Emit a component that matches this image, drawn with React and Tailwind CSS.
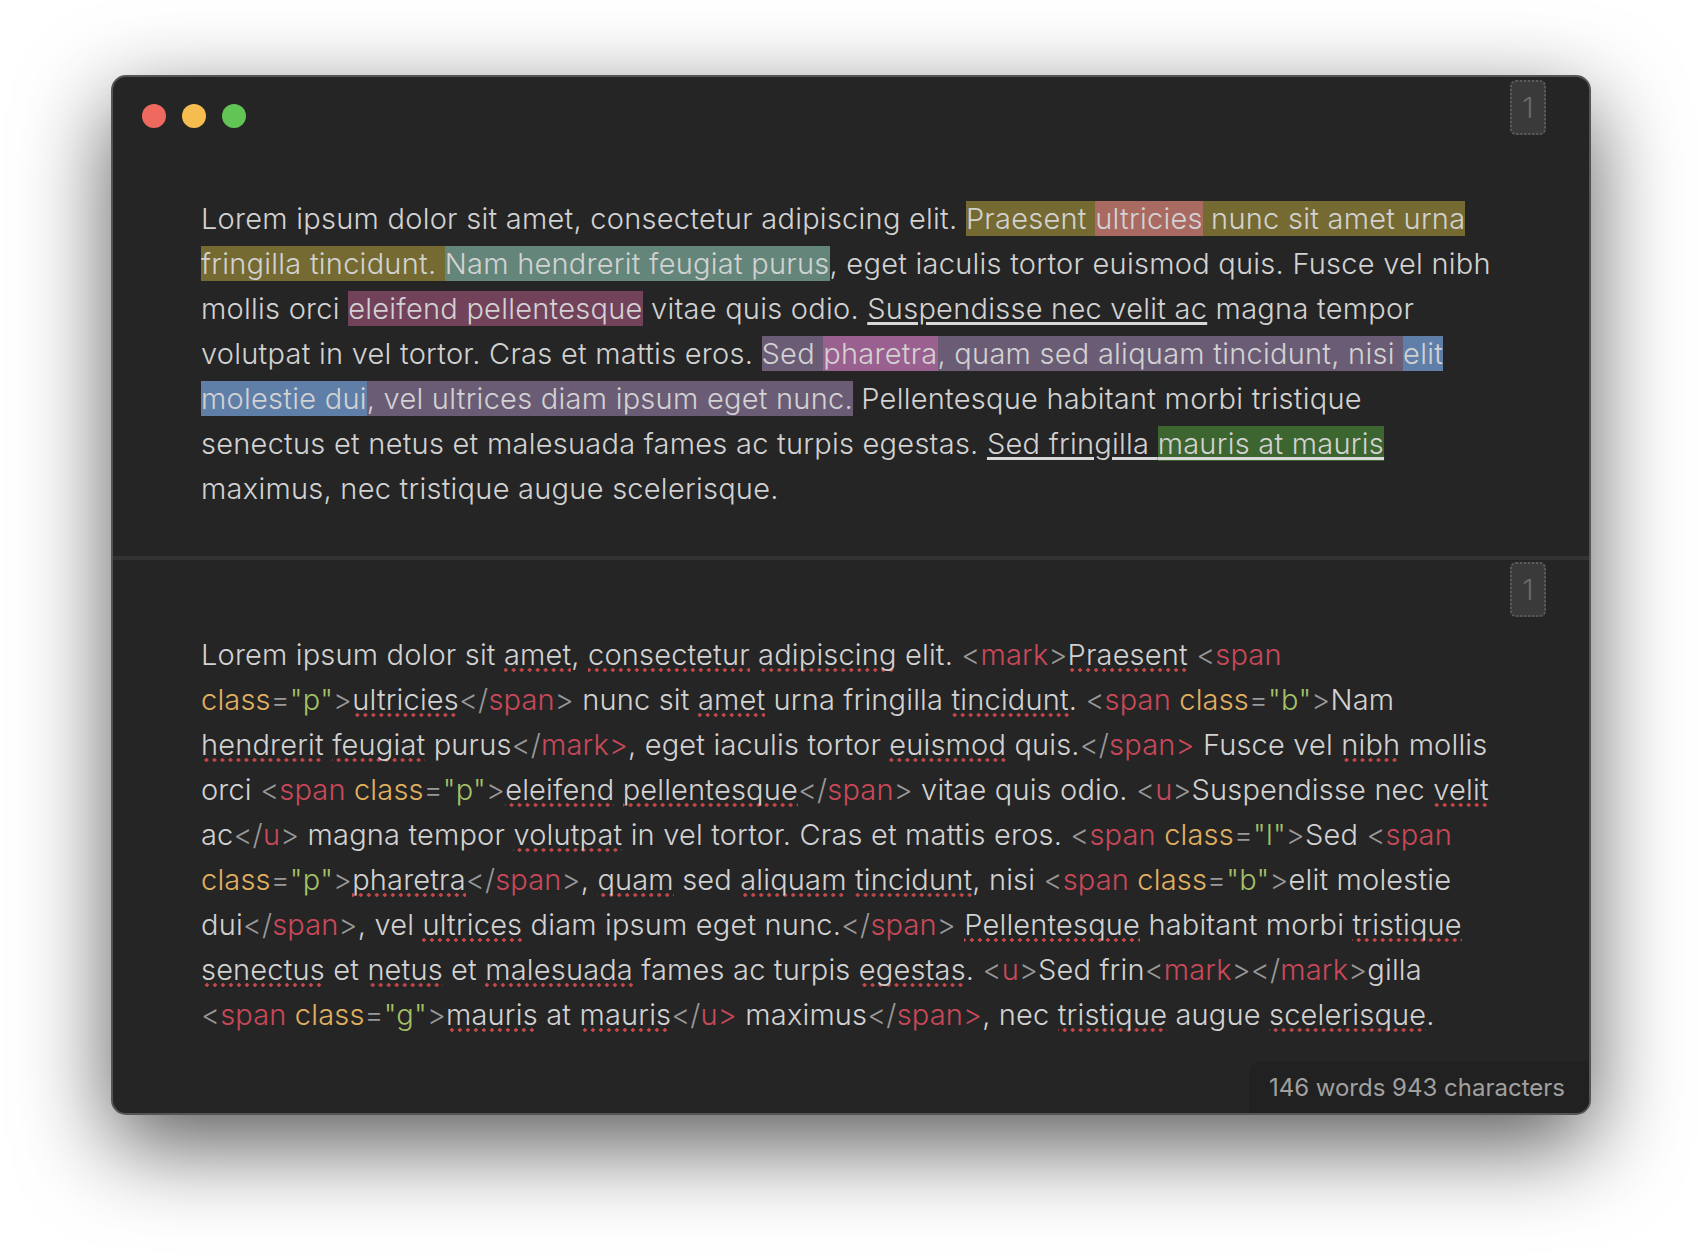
const Yel = ({ children }) => <span className="bg-[#756a32]">{children}</span>
const Pin = ({ children }) => <span className="bg-[#a96a62]">{children}</span>
const Tea = ({ children }) => <span className="bg-[#64867a]">{children}</span>
const Plu = ({ children }) => <span className="bg-[#72415a]">{children}</span>
const Pur = ({ children }) => <span className="bg-[#6b5c75]">{children}</span>
const Mag = ({ children }) => <span className="bg-[#9a6090]">{children}</span>
const Blu = ({ children }) => <span className="bg-[#5f7fa8]">{children}</span>
const Gre = ({ children }) => <span className="bg-[#3d6530]">{children}</span>
const U = ({ children }) => <span className="underline decoration-[3px] underline-offset-[3px] decoration-[#d8d8d8]">{children}</span>

// syntax pieces of the source pane
const R = ({ children }) => <span className="text-[#c9495a]">{children}</span>
const O = ({ children }) => <span className="text-[#e0b060]">{children}</span>
const G = ({ children }) => <span className="text-[#a3c068]">{children}</span>
const P = ({ children }) => <span className="text-[#999999]">{children}</span>
const S = ({ children }) => (
  <span className="bg-[radial-gradient(circle,#c9484a_1.5px,transparent_2px)] bg-[length:8px_4px] bg-repeat-x bg-bottom">
    {children}
  </span>
)
const Cls = ({ v }) => (
  <>
    <O>class</O>
    <P>=</P>
    <G>"{v}"</G>
    <P>&gt;</P>
  </>
)

const Badge = ({ className }) => (
  <div className={`absolute right-[43px] w-[36px] h-[55px] flex items-center justify-center rounded-md border-2 border-dotted border-[#5c5c5c] bg-[#3a3a3a] text-[#6a6a6a] text-[29px] font-light ${className}`}>
    1
  </div>
)

const Dots = () => (
  <div className="flex gap-4">
    <div className="w-6 h-6 rounded-full bg-[#ee6a5f]" />
    <div className="w-6 h-6 rounded-full bg-[#f5bd4f]" />
    <div className="w-6 h-6 rounded-full bg-[#61c454]" />
  </div>
)

export default function App() {
  return (
    <div className="min-h-[1260px] bg-white pl-[111px] pt-[75px] font-['Inter',sans-serif] overflow-hidden">
      <div className="relative w-[1480px] h-[1040px] rounded-[15px] border-2 border-[#555555] bg-[#252525] text-[#d2d2d2] shadow-[0_30px_90px_rgba(0,0,0,0.65)] overflow-hidden">
        <div className="relative h-[483px] border-b-4 border-[#333333]">
          <Badge className="top-[3px]" />
          <div className="pl-[29px] pt-[27px]">
            <Dots />
          </div>
          <p className="pl-[88px] pt-[68px] text-[29px] font-light leading-[45px] tracking-[0.25px] whitespace-nowrap">
            Lorem ipsum dolor sit amet, consectetur adipiscing elit. <Yel>Praesent </Yel><Pin>ultricies</Pin><Yel> nunc sit amet urna</Yel>
            <br />
            <Yel>fringilla tincidunt. </Yel><Tea>Nam hendrerit feugiat purus</Tea>, eget iaculis tortor euismod quis. Fusce vel nibh
            <br />
            mollis orci <Plu>eleifend pellentesque</Plu> vitae quis odio. <U>Suspendisse nec velit ac</U> magna tempor
            <br />
            volutpat in vel tortor. Cras et mattis eros. <Pur>Sed </Pur><Mag>pharetra</Mag><Pur>, quam sed aliquam tincidunt, nisi </Pur><Blu>elit</Blu>
            <br />
            <Blu>molestie dui</Blu><Pur>, vel ultrices diam ipsum eget nunc.</Pur> Pellentesque habitant morbi tristique
            <br />
            senectus et netus et malesuada fames ac turpis egestas. <U>Sed fringilla <Gre>mauris at mauris</Gre></U>
            <br />
            maximus, nec tristique augue scelerisque.
          </p>
        </div>
        <div className="relative">
          <Badge className="top-[2px]" />
          <p className="pl-[88px] pt-[72px] text-[29px] font-light leading-[45px] tracking-[0.17px] whitespace-nowrap">
            Lorem ipsum dolor sit <S>amet</S>, <S>consectetur</S> <S>adipiscing</S> elit. <P>&lt;</P><R>mark</R><P>&gt;</P><S>Praesent</S> <P>&lt;</P><R>span</R>
            <br />
            <Cls v="p" /><S>ultricies</S><P>&lt;/</P><R>span</R><P>&gt;</P> nunc sit <S>amet</S> urna fringilla <S>tincidunt</S>. <P>&lt;</P><R>span</R> <Cls v="b" />Nam
            <br />
            <S>hendrerit</S> <S>feugiat</S> purus<P>&lt;/</P><R>mark&gt;</R>, eget iaculis tortor <S>euismod</S> quis.<P>&lt;/</P><R>span&gt;</R> Fusce vel <S>nibh</S> mollis
            <br />
            orci <P>&lt;</P><R>span</R> <Cls v="p" /><S>eleifend</S> <S>pellentesque</S><P>&lt;/</P><R>span</R><P>&gt;</P> vitae quis odio. <P>&lt;</P><R>u</R><P>&gt;</P>Suspendisse nec <S>velit</S>
            <br />
            ac<P>&lt;/</P><R>u</R><P>&gt;</P> magna tempor <S>volutpat</S> in vel tortor. Cras et mattis eros. <P>&lt;</P><R>span</R> <Cls v="l" />Sed <P>&lt;</P><R>span</R>
            <br />
            <Cls v="p" /><S>pharetra</S><P>&lt;/</P><R>span</R><P>&gt;</P>, <S>quam</S> sed <S>aliquam</S> <S>tincidunt</S>, nisi <P>&lt;</P><R>span</R> <Cls v="b" />elit molestie
            <br />
            dui<P>&lt;/</P><R>span</R><P>&gt;</P>, vel <S>ultrices</S> diam ipsum eget nunc.<P>&lt;/</P><R>span</R><P>&gt;</P> <S>Pellentesque</S> habitant morbi <S>tristique</S>
            <br />
            <S>senectus</S> et <S>netus</S> et <S>malesuada</S> fames ac turpis <S>egestas</S>. <P>&lt;</P><R>u</R><P>&gt;</P>Sed frin<P>&lt;</P><R>mark</R><P>&gt;&lt;/</P><R>mark</R><P>&gt;</P>gilla
            <br />
            <P>&lt;</P><R>span</R> <Cls v="g" /><S>mauris</S> at <S>mauris</S><P>&lt;/</P><R>u&gt;</R> maximus<P>&lt;/</P><R>span&gt;</R>, nec <S>tristique</S> augue <S>scelerisque</S>.
          </p>
        </div>
        <div className="absolute bottom-0 right-0 w-[340px] h-[52px] flex items-center justify-end pr-[24px] pt-[2px] rounded-tl-[14px] bg-[#212121] text-[#a0a0a0] text-[24px]">
          146 words 943 characters
        </div>
      </div>
    </div>
  )
}
